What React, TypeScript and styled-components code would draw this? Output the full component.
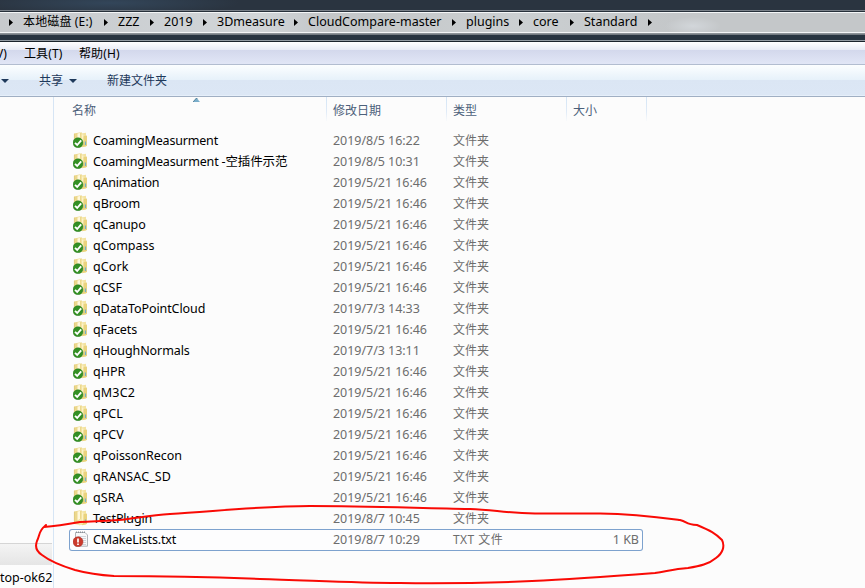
import React from "react";
import styled, { createGlobalStyle } from "styled-components";

const Global = createGlobalStyle`
  * { box-sizing: border-box; }
  html, body { margin: 0; padding: 0; overflow: hidden; }
  body { font: 13px/20px "Noto Sans", "Noto Sans CJK SC", sans-serif; color: #000; }
`;

const Window = styled.div`
  position: relative;
  width: 865px;
  height: 588px;
  overflow: hidden;
  display: flex;
  flex-direction: column;
  background: #fcfcfc;
  white-space: nowrap;
`;

const TitleGlass = styled.div`
  flex: none;
  height: 10px;
  background: radial-gradient(ellipse 130px 12px at 110px 3px, #33465a, transparent), #2a3440;
`;

const AddressBar = styled.nav`
  flex: none;
  height: 25px;
  border-top: 1px solid #7b828a;
  border-bottom: 1px solid #737a81;
  box-shadow: inset 0 1px #27303a, inset 0 2px #f4f6f7, inset 0 -1px #8d9398, inset 0 -2px #f4f5f6;
  background: radial-gradient(ellipse 28px 9px at 693px 15px, #d2d6da, transparent),
    linear-gradient(90deg, #c7cacd, #d1d5d8 30%, #c3c6c8 38%, #cbcfd1 60%, #c4c7c9 78%);
  display: flex;
  align-items: center;
`;

const Crumb = styled.span<{ $w: number; $cjk?: boolean }>`
  width: ${(p) => p.$w}px;
  font-size: ${(p) => (p.$cjk ? 12 : 12.5)}px;
  letter-spacing: ${(p) => (p.$cjk ? 0.15 : 0)}px;
  padding-bottom: 2px;
  flex: none;
`;

const CrumbArrow = styled.svg`
  flex: none;
  width: 4px;
  height: 7px;
  margin-right: 10px;
`;

const FrameEdge = styled.div`
  flex: none;
  height: 7px;
  background: #283440;
  border-bottom: 1px solid #1b232b;
  box-shadow: inset 0 -1px #929aa1;
`;

const MenuBar = styled.div`
  flex: none;
  height: 23px;
  display: flex;
  align-items: center;
  padding-top: 2px;
  font-size: 12px;
  background: linear-gradient(#fff, #e8ebf5 8px, #d3d8ec 8px, #e1e6f6 22px);
  border-bottom: 1px solid #b2bdd0;
`;

const MenuItem = styled.span<{ $w: number; $cut?: boolean }>`
  width: ${(p) => p.$w}px;
  text-indent: ${(p) => (p.$cut ? -4 : 0)}px;
  letter-spacing: 0.1px;
  flex: none;
`;

const Toolbar = styled.div`
  flex: none;
  height: 32px;
  display: flex;
  align-items: center;
  padding-left: 1px;
  font-size: 12px;
  color: #1e395b;
  background: linear-gradient(#fcfeff, #e6f1fa 15px, #dbe6f4 15px, #dce7f5 30px, #e6effa 30px);
  border-bottom: 1px solid #a0afc3;
`;

const ToolItem = styled.span<{ $w?: number }>`
  width: ${(p) => (p.$w ? `${p.$w}px` : "auto")};
  flex: none;
`;

const DropArrow = styled.svg<{ $gap: number }>`
  flex: none;
  width: 8px;
  height: 4px;
  margin-right: ${(p) => p.$gap}px;
`;

const Body = styled.div`
  flex: 1;
  min-height: 0;
  display: flex;
`;

const NavPane = styled.aside`
  width: 54px;
  flex: none;
  border-right: 1px solid #d6e5f5;
  display: flex;
  flex-direction: column;
  justify-content: flex-end;
`;

const PaneShade = styled.div`
  height: 22px;
  margin-right: 1px;
  border-top: 1px solid #d5d5d5;
  background: linear-gradient(#f4f4f4, #e5e5e5);
`;

const PaneLabel = styled.div`
  height: 23px;
  padding-top: 3px;
  font-size: 12.5px;
  overflow: hidden;
`;

const List = styled.main`
  flex: 1;
  padding-left: 15px;
`;

const Header = styled.div`
  height: 33px;
  display: flex;
  position: relative;
  color: #4c607a;
  font-size: 12px;
`;

const HeaderCell = styled.div<{ $w: number; $pad: number }>`
  width: ${(p) => p.$w}px;
  height: 24px;
  padding: 4px 0 0 ${(p) => p.$pad}px;
  flex: none;
  border-right: 1px solid;
  border-image: linear-gradient(#d3e4f5, #e0ebf7 60%, #fcfcfc) 1;
`;

const SortMark = styled.svg`
  position: absolute;
  left: 124px;
  top: 1px;
  width: 7px;
  height: 4px;
`;

const Row = styled.div<{ $selected?: boolean }>`
  width: 574px;
  height: ${(p) => (p.$selected ? 22 : 21)}px;
  display: grid;
  grid-template-columns: 24px 240px 120px 120px 66px;
  line-height: 21px;
  border-radius: 3px;
  box-shadow: ${(p) => (p.$selected ? "inset 0 0 0 1px #7da2ce" : "none")};
  background: ${(p) => (p.$selected ? "#fdfdfe" : "none")};
`;

const IconCell = styled.div`
  padding: 2px 0 0 4px;
  line-height: 0;
`;

const Name = styled.span<{ $track?: number }>`
  letter-spacing: ${(p) => p.$track ?? 0}px;
  font-size: 12.5px;
`;

const Meta = styled.span<{ $cjk?: boolean; $right?: boolean; $track?: number }>`
  color: #6d6d6d;
  font-size: ${(p) => (p.$cjk ? 12 : 12.5)}px;
  letter-spacing: ${(p) => p.$track ?? 0}px;
  text-align: ${(p) => (p.$right ? "right" : "left")};
`;

const Scribble = styled.svg`
  position: absolute;
  left: 0;
  top: 488px;
  width: 865px;
  height: 100px;
  pointer-events: none;
`;

const Arrow = () => (
  <CrumbArrow viewBox="0 0 4 7"><path d="M0 0L4 3.5L0 7Z" fill="#000" /></CrumbArrow>
);

const Down = ({ gap }: { gap: number }) => (
  <DropArrow $gap={gap} viewBox="0 0 8 4"><path d="M0 0H8L4 4Z" fill="#1e395b" /></DropArrow>
);

const FolderIcon = ({ synced }: { synced?: boolean }) => (
  <svg width="16" height="16" viewBox="0 0 16 16">
    <path d="M1 1.5L6.5 .5H9V15L1 14Z" fill="#ecd88c" />
    <path d="M1.4 1.8V14" stroke="#dcc67a" strokeWidth=".8" />
    <path d="M8 1.5L13 .8V14.5L8 15Z" fill="#f3e3a2" />
    <path d="M4.5 1.5L7 1V9L4.5 10.5Z" fill="#fff8dc" />
    <path d="M9 4.5L14 3.5V14L9 15.2Z" fill="#ead37e" />
    <path d="M5.5 10L10 7.5V14L6 15.6Z" fill="#f5e7ab" />
    <path d="M9.7 2.5V11.5" stroke="#fcf3c9" strokeWidth="1.4" />
    <path d="M12.5 9.5V13" stroke="#75aecb" strokeWidth="1.2" />
    {synced && (
      <>
        <circle cx="5" cy="10.8" r="5" fill="#349024" stroke="#257a1c" strokeWidth=".5" />
        <path d="M2 10.9L4.2 13L8.2 8.4" fill="none" stroke="#fff" strokeWidth="1.9" />
      </>
    )}
  </svg>
);

const TextIcon = () => (
  <svg width="16" height="16" viewBox="0 0 16 16">
    <path d="M2.5 1.5H12L14.5 4V15.2H2.5Z" fill="#f8f9fa" stroke="#b0b4b9" />
    <path d="M3 1.3H12.5" stroke="#8a9198" strokeWidth="1.6" strokeDasharray="1 1" />
    <path d="M5 5.5H13M5 7.5H13M5 9.5H13M5 11.5H13M5 13.5H13" stroke="#c5ccd3" strokeWidth=".8" />
    <circle cx="5" cy="10.8" r="5" fill="#cb3a2c" stroke="#a92d22" strokeWidth=".5" />
    <path d="M5 7.4V11.4M5 12.5V14" stroke="#fff" strokeWidth="1.7" />
  </svg>
);

const SPRING = "2019/5/21 16:46";
const files: { name: string; date: string; plain?: boolean; track?: number }[] = [
  { name: "CoamingMeasurment", date: "2019/8/5 16:22", track: -0.18 },
  { name: "CoamingMeasurment -空插件示范", date: "2019/8/5 10:31", track: -0.15 },
  { name: "qAnimation", date: SPRING, track: -0.2 },
  { name: "qBroom", date: SPRING, track: -0.05 },
  { name: "qCanupo", date: SPRING, track: -0.1 },
  { name: "qCompass", date: SPRING },
  { name: "qCork", date: SPRING, track: 0.1 },
  { name: "qCSF", date: SPRING },
  { name: "qDataToPointCloud", date: "2019/7/3 14:33", track: -0.08 },
  { name: "qFacets", date: SPRING, track: -0.1 },
  { name: "qHoughNormals", date: "2019/7/3 13:11", track: -0.08 },
  { name: "qHPR", date: SPRING },
  { name: "qM3C2", date: SPRING, track: 0.15 },
  { name: "qPCL", date: SPRING },
  { name: "qPCV", date: SPRING },
  { name: "qPoissonRecon", date: SPRING, track: -0.04 },
  { name: "qRANSAC_SD", date: SPRING, track: 0.1 },
  { name: "qSRA", date: SPRING, track: 0.15 },
  { name: "TestPlugin", date: "2019/8/7 10:45", plain: true, track: -0.18 },
];

const crumbs: [string, number][] = [
  ["本地磁盘 (E:)", 81],
  ["ZZZ", 32],
  ["2019", 39],
  ["3Dmeasure", 77],
  ["CloudCompare-master", 144],
  ["plugins", 53],
  ["core", 37],
  ["Standard", 64],
];

export default function App() {
  return (
    <Window>
      <Global />
      <TitleGlass />
      <AddressBar>
        <Crumb $w={9} />
        <Arrow />
        {crumbs.map(([label, w], i) => (
          <React.Fragment key={label}>
            <Crumb $w={w} $cjk={i === 0}>{label}</Crumb>
            <Arrow />
          </React.Fragment>
        ))}
      </AddressBar>
      <FrameEdge />
      <MenuBar>
        <MenuItem $w={24} $cut>V)</MenuItem>
        <MenuItem $w={55}>工具(T)</MenuItem>
        <MenuItem $w={60}>帮助(H)</MenuItem>
      </MenuBar>
      <Toolbar>
        <Down gap={30} />
        <ToolItem $w={30}>共享</ToolItem>
        <Down gap={30} />
        <ToolItem>新建文件夹</ToolItem>
      </Toolbar>
      <Body>
        <NavPane>
          <PaneShade />
          <PaneLabel>top-ok62</PaneLabel>
        </NavPane>
        <List>
          <Header>
            <HeaderCell $w={258} $pad={3}>名称</HeaderCell>
            <HeaderCell $w={120} $pad={6}>修改日期</HeaderCell>
            <HeaderCell $w={120} $pad={6}>类型</HeaderCell>
            <HeaderCell $w={80} $pad={6}>大小</HeaderCell>
            <SortMark viewBox="0 0 7 4">
              <path d="M0 4L3.5 0L7 4Z" fill="#79aecb" />
              <path d="M0 4L3.5 0L4.5 1.2" fill="none" stroke="#41718d" strokeWidth=".8" />
            </SortMark>
          </Header>
          {files.map((f) => (
            <Row key={f.name}>
              <IconCell><FolderIcon synced={!f.plain} /></IconCell>
              <Name $track={f.track}>{f.name}</Name>
              <Meta $track={-0.04}>{f.date}</Meta>
              <Meta $cjk>文件夹</Meta>
            </Row>
          ))}
          <Row $selected>
            <IconCell><TextIcon /></IconCell>
            <Name $track={-0.15}>CMakeLists.txt</Name>
            <Meta $track={-0.04}>2019/8/7 10:29</Meta>
            <Meta $cjk $track={0.45}>TXT 文件</Meta>
            <Meta $right>1 KB</Meta>
          </Row>
        </List>
      </Body>
      <Scribble viewBox="0 488 865 100" fill="none" stroke="#f90a05" strokeWidth="2" strokeLinecap="round" strokeLinejoin="round">
        <path d="M46 525L44 527C58 526 69 524 80 522C96 521 113 521 128 519C143 517 154 515 170 514C218 511 263 506 310 506C365 506 415 508 470 509C495 510 505 513 535 513.5H600C635 514 657 517 680 520C688 522 685 524 697 525C711 531 715 533 722 540C725 546 723 553 716 558C709 564 700 566 688 568C674 569 668 571 655 573C615 576 575 579 532 581C488 583 443 583.5 400 583C350 583 305 580 260 579C210 577 160 576 114 576C98 575 86 573 75 570C62 566 51 562 42 555C36 551 35 546 37 541C40 535 39 530 45 526" />
      </Scribble>
    </Window>
  );
}
